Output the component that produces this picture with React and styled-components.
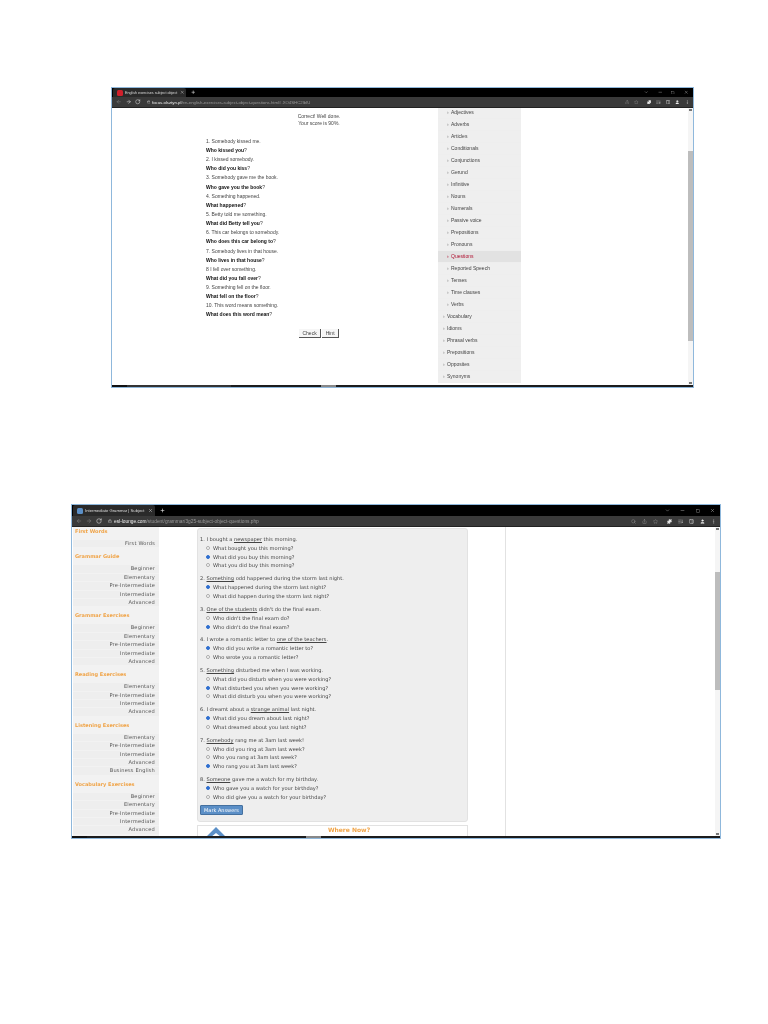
import React from 'react'
import styled, { createGlobalStyle } from 'styled-components'
import {
  ArrowLeft,
  ArrowRight,
  RotateCw,
  Lock,
  Plus,
  X,
  Minus,
  ChevronDown,
  Square,
  Search,
  Share,
  Star,
  Puzzle,
  ListMusic,
  PanelRight,
  User,
  MoreVertical,
} from 'lucide-react'

const GlobalStyle = createGlobalStyle`
  html, body {
    margin: 0;
    padding: 0;
    background: #fff;
  }
  body {
    font-family: 'Liberation Sans', Arial, sans-serif;
  }
`

const exerciseOne = [
  ['1. Somebody kissed me.', 'Who kissed you', '?'],
  ['2. I kissed somebody.', 'Who did you kiss', '?'],
  ['3. Somebody gave me the book.', 'Who gave you the book', '?'],
  ['4. Something happened.', 'What happened', '?'],
  ['5. Betty told me something.', 'What did Betty tell you', '?'],
  ['6. This car belongs to somebody.', 'Who does this car belong to', '?'],
  ['7. Somebody lives in that house.', 'Who lives in that house', '?'],
  ['8 I fell over something.', 'What did you fall over', '?'],
  ['9. Something fell on the floor.', 'What fell on the floor', '?'],
  ['10. This word means something.', 'What does this word mean', '?'],
]

const topicsNested = [
  'Adjectives',
  'Adverbs',
  'Articles',
  'Conditionals',
  'Conjunctions',
  'Gerund',
  'Infinitive',
  'Nouns',
  'Numerals',
  'Passive voice',
  'Prepositions',
  'Pronouns',
  'Questions',
  'Reported Speech',
  'Tenses',
  'Time clauses',
  'Verbs',
]

const topicsMain = ['Vocabulary', 'Idioms', 'Phrasal verbs', 'Prepositions', 'Opposites', 'Synonyms']

const levels = ['Beginner', 'Elementary', 'Pre-Intermediate', 'Intermediate', 'Advanced']
const skillLevels = ['Elementary', 'Pre-Intermediate', 'Intermediate', 'Advanced']

const siteMenu = [
  { title: 'First Words', items: ['First Words'] },
  { title: 'Grammar Guide', items: levels },
  { title: 'Grammar Exercises', items: levels },
  { title: 'Reading Exercises', items: skillLevels },
  { title: 'Listening Exercises', items: [...skillLevels, 'Business English'] },
  { title: 'Vocabulary Exercises', items: levels },
]

const quiz = [
  {
    q: ['1. I bought a ', 'newspaper', ' this morning.'],
    answers: ['What bought you this morning?', 'What did you buy this morning?', 'What you did buy this morning?'],
    picked: 1,
  },
  {
    q: ['2. ', 'Something', ' odd happened during the storm last night.'],
    answers: ['What happened during the storm last night?', 'What did happen during the storm last night?'],
    picked: 0,
  },
  {
    q: ['3. ', 'One of the students', " didn't do the final exam."],
    answers: ["Who didn't the final exam do?", "Who didn't do the final exam?"],
    picked: 1,
  },
  {
    q: ['4. I wrote a romantic letter to ', 'one of the teachers', '.'],
    answers: ['Who did you write a romantic letter to?', 'Who wrote you a romantic letter?'],
    picked: 0,
  },
  {
    q: ['5. ', 'Something', ' disturbed me when I was working.'],
    answers: [
      'What did you disturb when you were working?',
      'What disturbed you when you were working?',
      'What did disturb you when you were working?',
    ],
    picked: 1,
  },
  {
    q: ['6. I dreamt about a ', 'strange animal', ' last night.'],
    answers: ['What did you dream about last night?', 'What dreamed about you last night?'],
    picked: 0,
  },
  {
    q: ['7. ', 'Somebody', ' rang me at 3am last week!'],
    answers: ['Who did you ring at 3am last week?', 'Who you rang at 3am last week?', 'Who rang you at 3am last week?'],
    picked: 2,
  },
  {
    q: ['8. ', 'Someone', ' gave me a watch for my birthday.'],
    answers: ['Who gave you a watch for your birthday?', 'Who did give you a watch for your birthday?'],
    picked: 0,
  },
]

const Chrome = ({ title, domain, path, favicon, zoomIcon, small }) => {
  const size = small ? 4.5 : 5
  return (
    <>
      <TitleBar $h={small ? 9 : 11}>
        <Tab $w={small ? 73 : 82}>
          <Favicon $color={favicon} />
          <TabTitle $small={small}>{title}</TabTitle>
          <X size={size} color='#ddd' />
        </Tab>
        <Plus size={size} color='#ddd' strokeWidth={3} />
        <WindowControls $gap={small ? 9 : 10.5}>
          <ChevronDown size={size} />
          <Minus size={size} />
          <Square size={size - 1} />
          <X size={size} />
        </WindowControls>
      </TitleBar>
      <ToolBar>
        <ArrowLeft size={size + 1} color='#888' />
        <ArrowRight size={size + 1} color={small ? '#eee' : '#888'} />
        <RotateCw size={size + 1} color='#eee' />
        <Address $small={small}>
          <Lock size={size - 1} color='#ddd' />
          <span>
            <Domain>{domain}</Domain>
            {path}
          </span>
        </Address>
        <ToolIcons $gap={small ? 5 : 6}>
          {zoomIcon && <Search size={size} color='#999' />}
          <Share size={size} color='#999' />
          <Star size={size} color='#999' />
          <Extensions>
            <Puzzle size={size} color='#eee' fill='#eee' />
          </Extensions>
          <ListMusic size={size} color='#bbb' />
          <PanelRight size={size} color='#eee' />
          <User size={size} color='#eee' fill='#eee' />
          <MoreVertical size={size} color='#bbb' />
        </ToolIcons>
      </ToolBar>
    </>
  )
}

const Scroller = ({ top, height }) => (
  <ScrollTrack>
    <ScrollArrow />
    <ScrollThumb $top={top} $h={height} />
    <ScrollArrow $down />
  </ScrollTrack>
)

const App = () => {
  return (
    <Page>
      <GlobalStyle />
      <Window $left={111} $w={583} $h={301} $gap={116}>
        <Chrome
          small
          title='English exercises subject object'
          domain='focus.olsztyn.pl'
          path='/en-english-exercises-subject-object-questions.html#.XO4SHC2lbIU'
          favicon='#d0202c'
        />
        <Body>
          <Exercise>
            <Score>
              Correct! Well done.
              <br />
              Your score is 90%.
            </Score>
            <Sentences>
              {exerciseOne.map(([task, answer, mark]) => (
                <React.Fragment key={task}>
                  <Sentence>{task}</Sentence>
                  <Sentence>
                    <b>{answer}</b>
                    {mark}
                  </Sentence>
                </React.Fragment>
              ))}
            </Sentences>
            <Buttons>
              <FlatButton>Check</FlatButton>
              <FlatButton>Hint</FlatButton>
            </Buttons>
          </Exercise>
          <TopicMenu>
            {topicsNested.map((t) => (
              <Topic key={t} $nested $active={t === 'Questions'}>
                <Bullet $active={t === 'Questions'}>›</Bullet>
                {t}
              </Topic>
            ))}
            {topicsMain.map((t) => (
              <Topic key={t}>
                <Bullet>›</Bullet>
                {t}
              </Topic>
            ))}
          </TopicMenu>
          <Scroller top={43} height={190} />
        </Body>
        <BottomStrip>
          <StripPart $w={15} $c='#111' />
          <StripPart $w={104} $c='#333' />
          <StripPart $w={90} $c='#1c1c1c' />
          <StripPart $w={15} $c='#888' />
          <StripPart $w={300} $c='#1c1c1c' />
        </BottomStrip>
      </Window>

      <Window $left={71} $w={650} $h={335}>
        <Chrome
          zoomIcon
          title='Intermediate Grammar | Subject'
          domain='esl-lounge.com'
          path='/student/grammar/3g25-subject-object-questions.php'
          favicon='#5b8fc7'
        />
        <Body>
          <SiteMenu>
            {siteMenu.map((group) => (
              <MenuGroup key={group.title}>
                <MenuTitle>{group.title}</MenuTitle>
                <MenuList>
                  {group.items.map((item) => (
                    <MenuItem key={item}>{item}</MenuItem>
                  ))}
                </MenuList>
              </MenuGroup>
            ))}
          </SiteMenu>
          <Middle>
            <QuizPanel>
              {quiz.map((item) => (
                <Question key={item.q.join('')}>
                  <QuestionText>
                    {item.q[0]}
                    <u>{item.q[1]}</u>
                    {item.q[2]}
                  </QuestionText>
                  {item.answers.map((a, i) => (
                    <Answer key={a}>
                      <Radio $on={i === item.picked} />
                      {a}
                    </Answer>
                  ))}
                </Question>
              ))}
              <MarkButton>Mark Answers</MarkButton>
            </QuizPanel>
            <WhereNow>
              <svg width='20' height='10' viewBox='0 0 20 10'>
                <path d='M10 0 L20 10 H15 L10 6 L5 10 H0 Z' fill='#5b8fc7' />
              </svg>
              <WhereTitle>Where Now?</WhereTitle>
            </WhereNow>
          </Middle>
          <RightRail />
          <Scroller top={45} height={118} />
        </Body>
        <BottomStrip>
          <StripPart $w={15} $c='#111' />
          <StripPart $w={219} $c='#1c1c1c' />
          <StripPart $w={15} $c='#888' />
          <StripPart $w={400} $c='#1c1c1c' />
        </BottomStrip>
      </Window>
    </Page>
  )
}

const Page = styled.div`
  width: 768px;
  height: 1024px;
  padding-top: 87px;
  box-sizing: border-box;
  background: #fff;
  overflow: hidden;
`
const Window = styled.div`
  display: flex;
  flex-direction: column;
  box-sizing: border-box;
  width: ${(p) => p.$w}px;
  height: ${(p) => p.$h}px;
  margin-left: ${(p) => p.$left}px;
  margin-bottom: ${(p) => p.$gap || 0}px;
  border: 1px solid #8fb8dc;
  background: #fff;
  overflow: hidden;
  filter: blur(0.3px);
`
const TitleBar = styled.div`
  flex: none;
  height: ${(p) => p.$h}px;
  display: flex;
  align-items: center;
  gap: 5px;
  background: #000;
  padding-left: 1px;
`
const Tab = styled.div`
  width: ${(p) => p.$w}px;
  height: 100%;
  display: flex;
  align-items: center;
  gap: 2px;
  padding: 0 2px 0 4px;
  box-sizing: border-box;
  border-radius: 2px 2px 0 0;
  background: #2a2a2a;
`
const Favicon = styled.span`
  flex: none;
  width: 6px;
  height: 6px;
  border-radius: 1.5px;
  background: ${(p) => p.$color};
`
const TabTitle = styled.span`
  flex: 1;
  min-width: 0;
  white-space: nowrap;
  font-size: ${(p) => (p.$small ? 3.7 : 4.2)}px;
  color: #ddd;
`
const WindowControls = styled.div`
  margin-left: auto;
  display: flex;
  align-items: center;
  gap: ${(p) => p.$gap}px;
  padding-right: 5px;
  color: #bbb;
`
const ToolBar = styled.div`
  flex: none;
  height: 11px;
  display: flex;
  align-items: center;
  gap: 4px;
  padding: 0 4px;
  box-sizing: border-box;
  background: #3a3a3a;
  border-bottom: 1px solid #222;
`
const Address = styled.div`
  flex: 1;
  min-width: 0;
  display: flex;
  align-items: center;
  gap: 2px;
  margin-left: 2px;
  font-size: ${(p) => (p.$small ? 4.3 : 4.8)}px;
  color: #999;
  white-space: nowrap;
`
const Domain = styled.span`
  color: #eee;
`
const ToolIcons = styled.div`
  display: flex;
  align-items: center;
  gap: ${(p) => p.$gap}px;
`
const Extensions = styled.span`
  display: flex;
  margin-left: 3px;
`
const Body = styled.div`
  flex: 1;
  min-height: 0;
  display: flex;
  background: #fff;
  overflow: hidden;
`
const Exercise = styled.div`
  flex: none;
  width: 226px;
  margin-left: 94px;
  margin-right: 6px;
  padding-top: 5px;
  font-size: 5px;
  color: #444;
`
const Score = styled.div`
  text-align: center;
  line-height: 7.4px;
`
const Sentences = styled.div`
  margin-top: 9px;
`
const Sentence = styled.div`
  height: 9.15px;
  line-height: 9.15px;
  white-space: nowrap;
  b {
    color: #111;
  }
`
const Buttons = styled.div`
  display: flex;
  justify-content: center;
  gap: 1px;
  margin-top: 9px;
`
const FlatButton = styled.div`
  padding: 0 3.5px;
  height: 8px;
  line-height: 8px;
  font-size: 5px;
  background: #f6f6f6;
  border-right: 1px solid #555;
  border-bottom: 1px solid #555;
`
const TopicMenu = styled.div`
  flex: none;
  width: 83px;
  height: 276px;
  margin-top: -1px;
  background: #eee;
`
const Topic = styled.div`
  height: 11px;
  line-height: 11px;
  margin-bottom: 1px;
  padding-left: ${(p) => (p.$nested ? 9 : 5)}px;
  font-size: 5px;
  white-space: nowrap;
  color: ${(p) => (p.$active ? '#b01030' : '#444')};
  background: ${(p) => (p.$active ? '#e2e2e2' : '#efefef')};
`
const Bullet = styled.span`
  display: inline-block;
  width: 4px;
  color: ${(p) => (p.$active ? '#b01030' : '#888')};
`
const ScrollTrack = styled.div`
  flex: none;
  margin-left: auto;
  width: 5px;
  position: relative;
  background: #f5f5f5;
`
const ScrollArrow = styled.div`
  position: absolute;
  left: 1px;
  ${(p) => (p.$down ? 'bottom: 1px;' : 'top: 1px;')}
  width: 3px;
  height: 2px;
  background: #777;
`
const ScrollThumb = styled.div`
  position: absolute;
  left: 0;
  right: 0;
  top: ${(p) => p.$top}px;
  height: ${(p) => p.$h}px;
  background: #bdbdbd;
`
const BottomStrip = styled.div`
  flex: none;
  height: 2px;
  display: flex;
  background: #1c1c1c;
`
const StripPart = styled.div`
  width: ${(p) => p.$w}px;
  background: ${(p) => p.$c};
`
const SiteMenu = styled.div`
  flex: none;
  width: 86px;
  margin-left: 1px;
  background: #f2f2f2;
  font-family: 'DejaVu Sans', Verdana, sans-serif;
`
const MenuGroup = styled.div`
  margin-bottom: 4px;
`
const MenuTitle = styled.div`
  height: 8px;
  line-height: 8px;
  padding-left: 2px;
  margin-bottom: 5px;
  font-size: 5px;
  font-weight: bold;
  color: #f0a448;
  white-space: nowrap;
`
const MenuList = styled.div`
  display: flex;
  flex-direction: column;
`
const MenuItem = styled.div`
  height: 7.4px;
  line-height: 7.4px;
  margin-bottom: 1px;
  padding-right: 4px;
  font-size: 5.1px;
  letter-spacing: 0.17px;
  text-align: right;
  white-space: nowrap;
  color: #555;
  background: #eee;
`
const Middle = styled.div`
  flex: none;
  width: 271px;
  margin-left: 38px;
  font-family: 'DejaVu Sans', Verdana, sans-serif;
`
const QuizPanel = styled.div`
  height: 294px;
  box-sizing: border-box;
  padding: 6px 2px 0;
  margin-top: 1px;
  border: 1px solid #e2e2e2;
  border-radius: 3px;
  background: #eee;
`
const Question = styled.div`
  margin-bottom: 4.5px;
`
const QuestionText = styled.div`
  height: 8.7px;
  line-height: 8.7px;
  font-size: 5.1px;
  color: #444;
  white-space: nowrap;
`
const Answer = styled.div`
  height: 8.7px;
  display: flex;
  align-items: center;
  gap: 3px;
  padding-left: 6px;
  font-size: 5.1px;
  color: #444;
  white-space: nowrap;
`
const Radio = styled.span`
  flex: none;
  box-sizing: border-box;
  width: 4px;
  height: 4px;
  border-radius: 50%;
  background: ${(p) => (p.$on ? '#2f6fd0' : '#fff')};
  border: 0.5px solid ${(p) => (p.$on ? '#2f6fd0' : '#aaa')};
`
const MarkButton = styled.div`
  width: fit-content;
  margin-top: -1px;
  padding: 0 3px;
  height: 8px;
  line-height: 8px;
  font-size: 5px;
  color: #fff;
  border: 1px solid #44709f;
  border-radius: 1px;
  background: #5b8fc7;
`
const WhereNow = styled.div`
  position: relative;
  height: 30px;
  margin-top: 3px;
  padding-left: 33px;
  border: 1px solid #e2e2e2;
  text-align: center;
  svg {
    position: absolute;
    left: 8px;
    top: 1px;
  }
`
const WhereTitle = styled.div`
  font-size: 6px;
  line-height: 8px;
  font-weight: bold;
  color: #f0a448;
`
const RightRail = styled.div`
  flex: none;
  width: 1px;
  margin-left: 37px;
  background: #e2e2e2;
`

export default App
